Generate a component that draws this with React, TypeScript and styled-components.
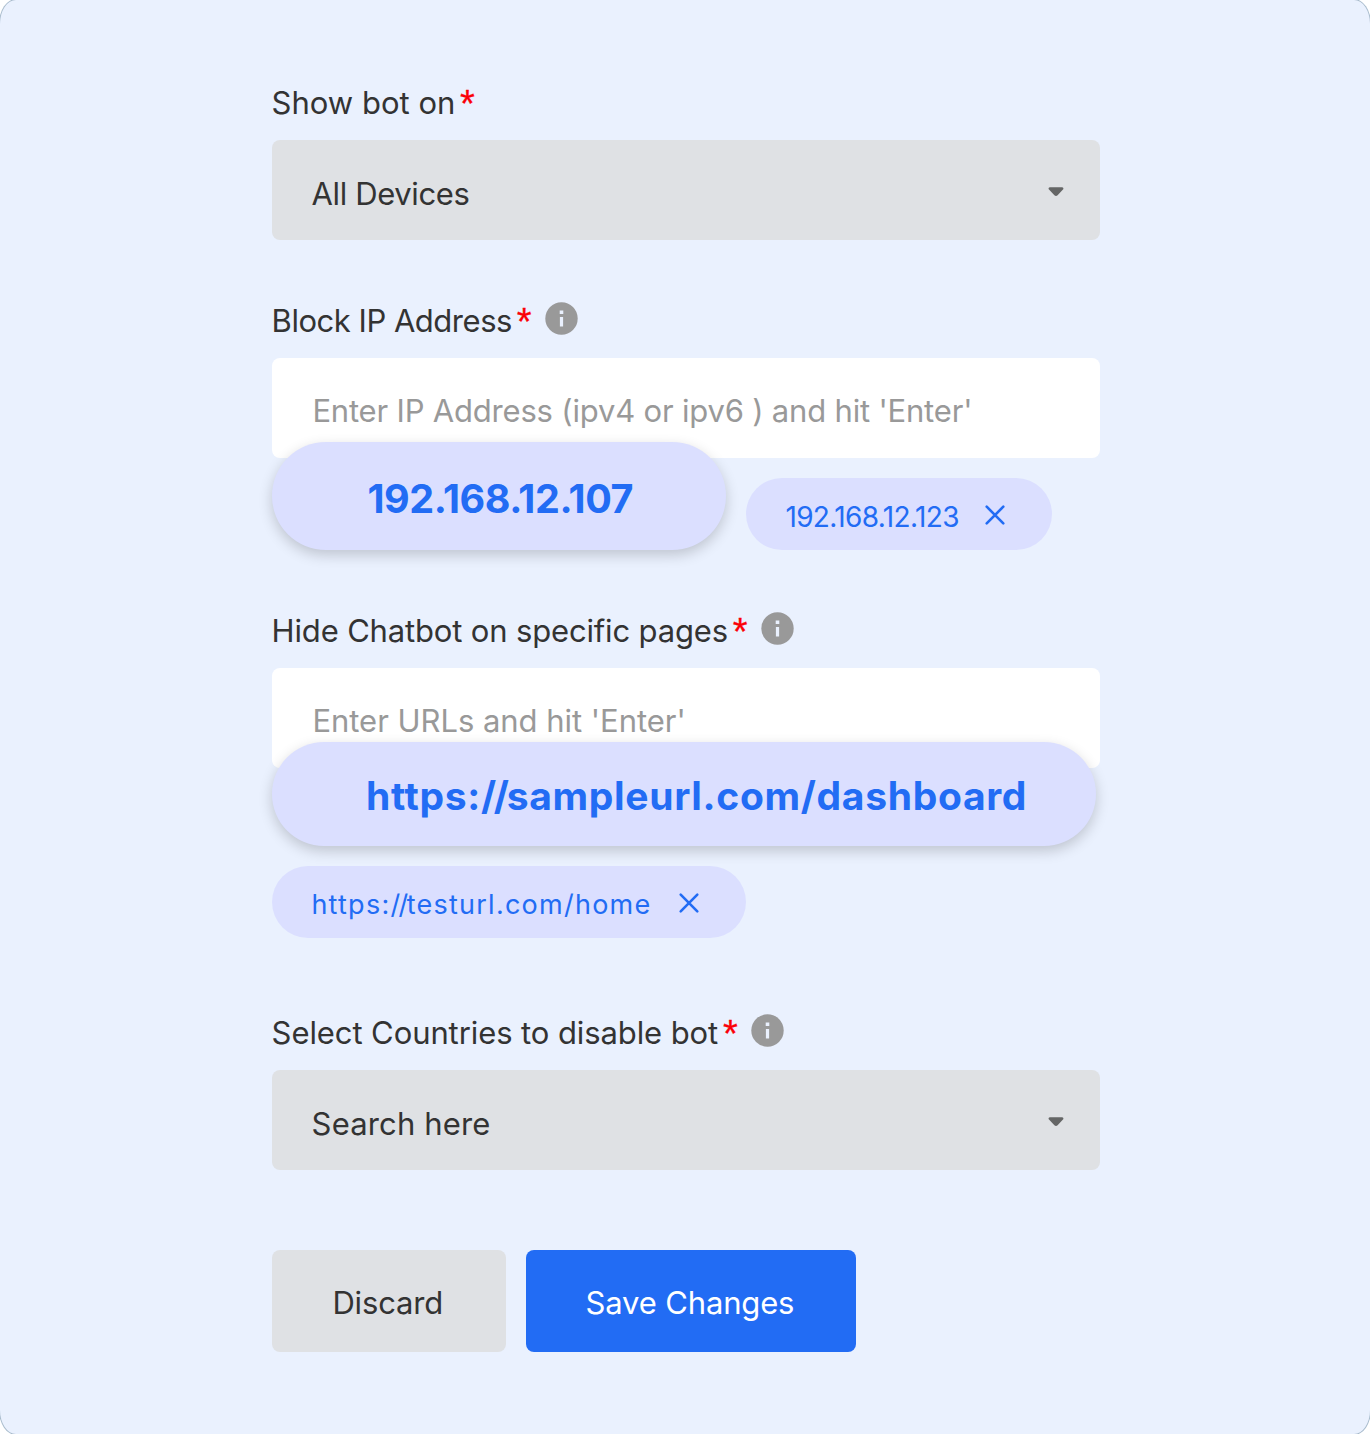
import React from "react";
import styled, { createGlobalStyle } from "styled-components";

const GlobalStyle = createGlobalStyle`
  * { box-sizing: border-box; }
  body { margin: 0; background: #fff; }
`;

const Panel = styled.main`
  width: 1370px;
  height: 1434px;
  overflow: hidden;
  padding: 83px 270px 0 272px;
  border-radius: 16px / 24px;
  background: #eaf1fe;
  box-shadow: 0 0 0 1px #a9bccd;
  color: #333;
  font-family: Inter, "Liberation Sans", sans-serif;
  font-size: 31px;
  font-weight: 400;
`;

const Form = styled.form`
  display: flex;
  flex-direction: column;
  gap: 61px;
`;

const FieldGroup = styled.section<{ $extraTop?: number }>`
  display: flex;
  flex-direction: column;
  margin-top: ${(p) => p.$extraTop ?? 0}px;
`;

const LabelRow = styled.div`
  display: flex;
  align-items: center;
  height: 40px;
  margin: 0 0 17px -0.4px;
  line-height: 40px;
  white-space: nowrap;
`;

const Label = styled.label<{ $tracking?: number }>`
  letter-spacing: ${(p) => p.$tracking ?? 0}px;
`;

const Required = styled.span`
  margin-left: 4.8px;
  padding-top: 1px;
  color: #fb0007;
  font-family: "Liberation Sans", Arial, sans-serif;
  font-size: 38px;
  -webkit-text-stroke: 0.3px #fb0007;
`;

const InfoSvg = styled.svg`
  width: 33px;
  height: 33px;
  margin: 0 0 5px 13.3px;
`;

const Control = styled.div`
  display: flex;
  align-items: center;
  height: 100px;
  border-radius: 8px;
  white-space: nowrap;
`;

const SelectBox = styled(Control)`
  justify-content: space-between;
  padding: 0 36.5px 0 39.6px;
  background: #dfe1e4;
`;

const SelectValue = styled.span<{ $tracking: number }>`
  padding-top: 7px;
  letter-spacing: ${(p) => p.$tracking}px;
`;

const CaretSvg = styled.svg`
  width: 16px;
  height: 12px;
  margin-top: 3px;
`;

const InputBox = styled(Control)`
  padding: 4px 40px 0 40.4px;
  background: #fff;
  color: #999;
`;

const Placeholder = styled.span<{ $tracking: number }>`
  letter-spacing: ${(p) => p.$tracking}px;
`;

const ChipList = styled.div<{ $overlap: number }>`
  display: flex;
  flex-wrap: wrap;
  align-items: flex-end;
  gap: 20px;
  margin-top: -${(p) => p.$overlap}px;
`;

const Chip = styled.div<{ $width: number }>`
  display: flex;
  align-items: center;
  justify-content: space-between;
  width: ${(p) => p.$width}px;
  height: 72px;
  padding: 0 45px 0 39.4px;
  border-radius: 36px;
  background: #dbdfff;
  color: #226cf4;
  white-space: nowrap;
`;

const RaisedChip = styled(Chip)<{ $height: number; $inset: number }>`
  height: ${(p) => p.$height}px;
  padding: 0 0 0 ${(p) => p.$inset}px;
  border-radius: 54px;
  box-shadow: 0 5px 14px rgba(0, 0, 0, 0.19);
  font-weight: 700;
`;

const ChipText = styled.span<{ $size: number; $tracking: number; $drop: number }>`
  padding-top: ${(p) => p.$drop}px;
  font-size: ${(p) => p.$size}px;
  letter-spacing: ${(p) => p.$tracking}px;
`;

const Slashes = styled.span`
  letter-spacing: -0.06em;
`;

const CloseSvg = styled.svg`
  width: 24px;
  height: 24px;
  margin-top: 2px;
`;

const Actions = styled.div`
  display: flex;
  gap: 20px;
  margin-top: 19px;
`;

const Button = styled.button<{ $primary?: boolean }>`
  width: ${(p) => (p.$primary ? 330 : 234)}px;
  height: 102px;
  padding: 2px 0 0 ${(p) => (p.$primary ? 59.5 : 60.4)}px;
  border: 0;
  border-radius: 8px;
  background: ${(p) => (p.$primary ? "#226cf4" : "#dfe1e4")};
  color: ${(p) => (p.$primary ? "#fff" : "#333")};
  font: inherit;
  letter-spacing: -0.15px;
  text-align: left;
`;

const InfoIcon = () => (
  <InfoSvg viewBox="0 0 33 33">
    <circle cx="16.5" cy="16.5" r="16.2" fill="#999" />
    <path d="M14.7 8.5h3.6v3.6h-3.6zM14.9 14.9h3.2v9.6h-3.2z" fill="#eaf1fe" />
  </InfoSvg>
);

const Caret = () => (
  <CaretSvg viewBox="0 0 16 12">
    <path
      d="M2 1.2h12c1.3 0 1.9 1.5 1 2.4l-5.4 5.7c-1 1-2.2 1-3.2 0L1 3.6c-.9-.9-.3-2.4 1-2.4Z"
      fill="#656666"
    />
  </CaretSvg>
);

const CloseIcon = () => (
  <CloseSvg viewBox="0 0 24 24">
    <path d="m3.7 3.7 16.6 16.6M20.3 3.7 3.7 20.3" fill="none" stroke="#226cf4" strokeWidth="2.6" strokeLinecap="round" />
  </CloseSvg>
);

type FieldLabelProps = { text: string; tracking?: number; info?: boolean };

const FieldLabel = ({ text, tracking, info }: FieldLabelProps) => (
  <LabelRow>
    <Label $tracking={tracking}>{text}</Label>
    <Required>*</Required>
    {info && <InfoIcon />}
  </LabelRow>
);

export default function App() {
  return (
    <>
      <GlobalStyle />
      <Panel>
        <Form>
          <FieldGroup>
            <FieldLabel text="Show bot on" />
            <SelectBox>
              <SelectValue $tracking={-0.38}>All Devices</SelectValue>
              <Caret />
            </SelectBox>
          </FieldGroup>

          <FieldGroup>
            <FieldLabel text="Block IP Address" tracking={-0.48} info />
            <InputBox>
              <Placeholder $tracking={-0.19}>Enter IP Address (ipv4 or ipv6 ) and hit 'Enter'</Placeholder>
            </InputBox>
            <ChipList $overlap={16}>
              <RaisedChip $width={454} $height={108} $inset={95.5}>
                <ChipText $size={39.5} $tracking={-0.44} $drop={5}>192.168.12.107</ChipText>
              </RaisedChip>
              <Chip $width={306}>
                <ChipText $size={28} $tracking={-0.64} $drop={5}>192.168.12.123</ChipText>
                <CloseIcon />
              </Chip>
            </ChipList>
          </FieldGroup>

          <FieldGroup>
            <FieldLabel text="Hide Chatbot on specific pages" tracking={-0.16} info />
            <InputBox>
              <Placeholder $tracking={-0.03}>Enter URLs and hit 'Enter'</Placeholder>
            </InputBox>
            <ChipList $overlap={26}>
              <RaisedChip $width={824} $height={104} $inset={94}>
                <ChipText $size={39} $tracking={0.68} $drop={3}>
                  https:<Slashes>//</Slashes>sampleurl.com/dashboard
                </ChipText>
              </RaisedChip>
              <Chip $width={474}>
                <ChipText $size={27} $tracking={1.25} $drop={4}>
                  https:<Slashes>//</Slashes>testurl.com/home
                </ChipText>
                <CloseIcon />
              </Chip>
            </ChipList>
          </FieldGroup>

          <FieldGroup $extraTop={14}>
            <FieldLabel text="Select Countries to disable bot" tracking={-0.09} info />
            <SelectBox>
              <SelectValue $tracking={0.16}>Search here</SelectValue>
              <Caret />
            </SelectBox>
          </FieldGroup>

          <Actions>
            <Button type="button">Discard</Button>
            <Button type="button" $primary>Save Changes</Button>
          </Actions>
        </Form>
      </Panel>
    </>
  );
}
